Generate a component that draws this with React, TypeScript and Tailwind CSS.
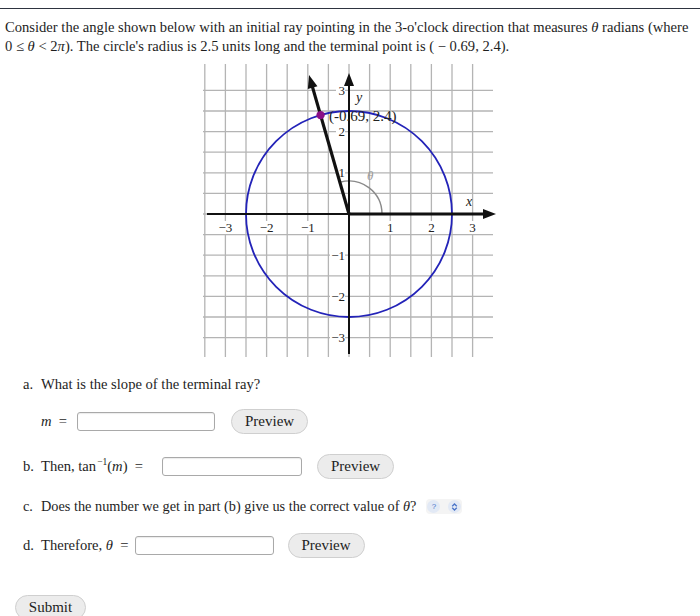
import React from 'react'

const O = { x: 149, y: 152 }
const U = 41.2
const G = 20.6

function arrowHead(tx: number, ty: number, dx: number, dy: number, len = 13, w = 5) {
  const bx = tx - dx * len
  const by = ty - dy * len
  const px = -dy * w
  const py = dx * w
  return `${tx},${ty} ${bx + px},${by + py} ${bx - px},${by - py}`
}

function Graph() {
  const verticals = Array.from({ length: 14 }, (_, i) => O.x + (i - 7) * G)
  const horizontals = Array.from({ length: 13 }, (_, i) => O.y + (i - 6) * G)
  const xLabels = [-3, -2, -1, 1, 2, 3]
  const yLabels = [3, 2, 1, -1, -2, -3]

  const dir = { x: -0.69 / 2.497, y: -2.4 / 2.497 }
  const rayLen = 144.6
  const tip = { x: O.x + dir.x * rayLen, y: O.y + dir.y * rayLen }
  const pt = { x: O.x - 0.69 * U, y: O.y - 2.4 * U }
  const arcR = 33
  const arcEnd = { x: O.x + dir.x * arcR, y: O.y + dir.y * arcR }

  return (
    <svg width="300" height="300" viewBox="0 0 300 300" className="block">
      {/* grid */}
      {verticals.map((x) => (
        <line key={'v' + x} x1={x} y1={2} x2={x} y2={295} stroke="#b4b4b4" strokeWidth={1.3} />
      ))}
      {horizontals.map((y) => (
        <line key={'h' + y} x1={3} y1={y} x2={293} y2={y} stroke="#b4b4b4" strokeWidth={1.3} />
      ))}

      {/* tick labels */}
      {xLabels.map((n) => (
        <g key={'xl' + n}>
          <rect x={O.x + n * U - 8} y={O.y + 7} width={16} height={13} fill="white" />
          <text
            x={O.x + n * U}
            y={O.y + 18}
            textAnchor="middle"
            fontSize="13"
            fontFamily="'Liberation Serif', serif"
            fill="#222"
          >
            {n < 0 ? '\u2212' + Math.abs(n) : n}
          </text>
        </g>
      ))}
      {yLabels.map((n) => (
        <g key={'yl' + n}>
          <rect x={n < 0 ? 130 : 136} y={O.y - n * U - 7} width={n < 0 ? 15 : 9} height={14} fill="white" />
          <text
            x={145}
            y={O.y - n * U + 4.5}
            textAnchor="end"
            fontSize="13"
            fontFamily="'Liberation Serif', serif"
            fill="#222"
          >
            {n < 0 ? '\u2212' + Math.abs(n) : n}
          </text>
        </g>
      ))}

      {/* circle */}
      <circle cx={O.x} cy={O.y} r={2.5 * U} fill="none" stroke="#2323b8" strokeWidth={1.8} />

      {/* theta arc */}
      <path
        d={`M ${O.x + arcR} ${O.y} A ${arcR} ${arcR} 0 0 0 ${arcEnd.x} ${arcEnd.y}`}
        fill="none"
        stroke="#8a8a8a"
        strokeWidth={1.4}
      />
      <text x={167} y={118} fontSize="13" fontStyle="italic" fontFamily="'Liberation Serif', serif" fill="#999">
        θ
      </text>

      {/* axes */}
      <line x1={7} y1={O.y} x2={285} y2={O.y} stroke="#111" strokeWidth={2} />
      <line x1={O.x} y1={O.y} x2={284} y2={O.y} stroke="#111" strokeWidth={3.2} />
      <polygon points={arrowHead(296, O.y, 1, 0)} fill="#111" />
      <line x1={O.x} y1={292} x2={O.x} y2={22} stroke="#111" strokeWidth={2} />
      <polygon points={arrowHead(O.x, 11, 0, -1)} fill="#111" />

      {/* terminal ray */}
      <line
        x1={O.x}
        y1={O.y}
        x2={tip.x - dir.x * 11}
        y2={tip.y - dir.y * 11}
        stroke="#111"
        strokeWidth={3.2}
      />
      <polygon points={arrowHead(tip.x, tip.y, dir.x, dir.y)} fill="#111" />

      <text x={156} y={40} fontSize="14" fontStyle="italic" fontFamily="'Liberation Serif', serif" fill="#222">
        y
      </text>
      <text x={266} y={144} fontSize="14" fontStyle="italic" fontFamily="'Liberation Serif', serif" fill="#222">
        x
      </text>

      {/* terminal point */}
      <circle cx={pt.x} cy={pt.y} r={4.2} fill="#8a0f86" />
      <text x={129} y={59} fontSize="15" fontFamily="'Liberation Serif', serif" fill="#222">
        (-0.69, 2.4)
      </text>
    </svg>
  )
}

function AnswerBox({ w }: { w: string }) {
  return <div className={`${w} h-[19px] border border-[#a9a9a9] rounded-[3px] bg-white shadow-[inset_0_1px_1px_rgba(0,0,0,0.08)]`} />
}

function PreviewButton({ className = '' }: { className?: string }) {
  return (
    <button
      className={`h-[25px] w-[77px] rounded-full border border-[#cfcfcf] bg-[#ececec] text-[15px] text-[#222] leading-none ${className}`}
    >
      Preview
    </button>
  )
}

function HelpSelect() {
  return (
    <span className="inline-flex items-center justify-between ml-[10px] h-[15px] w-[36px] rounded-[4px] bg-[#f4f4f4] px-[1px]">
      <span className="flex items-center justify-center w-[13px] h-[13px] rounded-full bg-[#e2e9f5] text-[8px] text-[#4a74c9] font-['Liberation_Sans',sans-serif] leading-none">
        ?
      </span>
      <span className="flex items-center justify-center w-[13px] h-[13px] rounded-full bg-[#e2e9f5]">
        <svg width="7" height="8" viewBox="0 0 7 8">
          <path d="M1.2 3.2 L3.5 1 L5.8 3.2 M1.2 4.8 L3.5 7 L5.8 4.8" fill="none" stroke="#4a74c9" strokeWidth="1.3" />
        </svg>
      </span>
    </span>
  )
}

export default function App() {
  return (
    <div className="w-[700px] h-[616px] overflow-hidden bg-white text-[14.6px] text-[#1e1e1e] font-['Liberation_Serif',serif]">
      <div className="pt-[8px]">
        <div className="border-t border-[#2e3440]" />
      </div>

      <p className="pt-[9px] px-[5px] leading-[19px] whitespace-nowrap">
        Consider the angle shown below with an initial ray pointing in the 3-o'clock direction that measures{' '}
        <i>θ</i> radians (where
        <br />0 ≤ <i>θ</i> &lt; 2<i>π</i>). The circle's radius is 2.5 units long and the terminal point is ( − 0.69, 2.4).
      </p>

      <div className="mt-[6px] ml-[200px]">
        <Graph />
      </div>

      <div className="pl-[23px]">
        <div className="mt-[13px] leading-[19px] flex">
          <span className="w-[18px]">a.</span>
          <span>What is the slope of the terminal ray?</span>
        </div>

        <div className="mt-[15px] pl-[18px] flex items-center h-[25px]">
          <span>
            <i>m</i>&nbsp;&nbsp;=
          </span>
          <AnswerBox w="w-[138px] ml-[10px]" />
          <PreviewButton className="ml-[16px]" />
        </div>

        <div className="mt-[20px] flex items-center h-[25px]">
          <span className="w-[18px]">b.</span>
          <span>
            Then, tan<span className="inline-block text-[9.5px] relative -top-[6px] ml-[1px]">−1</span>(<i>m</i>)&nbsp;&nbsp;=
          </span>
          <AnswerBox w="w-[140px] ml-[19px]" />
          <PreviewButton className="ml-[15px]" />
        </div>

        <div className="mt-[18px] flex items-center leading-[19px] text-[14.3px]">
          <span className="w-[18px]">c.</span>
          <span>
            Does the number we get in part (b) give us the correct value of <i>θ</i>?
          </span>
          <HelpSelect />
        </div>

        <div className="mt-[17px] flex items-center h-[25px]">
          <span className="w-[18px]">d.</span>
          <span>
            Therefore, <i>θ</i>&nbsp;&nbsp;=
          </span>
          <AnswerBox w="w-[139px] ml-[6px]" />
          <PreviewButton className="ml-[14px]" />
        </div>
      </div>

      <div className="mt-[37px] pl-[15px]">
        <button className="h-[25px] w-[71px] rounded-full border border-[#cfcfcf] bg-[#ececec] text-[15px] text-[#222] leading-none">
          Submit
        </button>
      </div>
    </div>
  )
}
